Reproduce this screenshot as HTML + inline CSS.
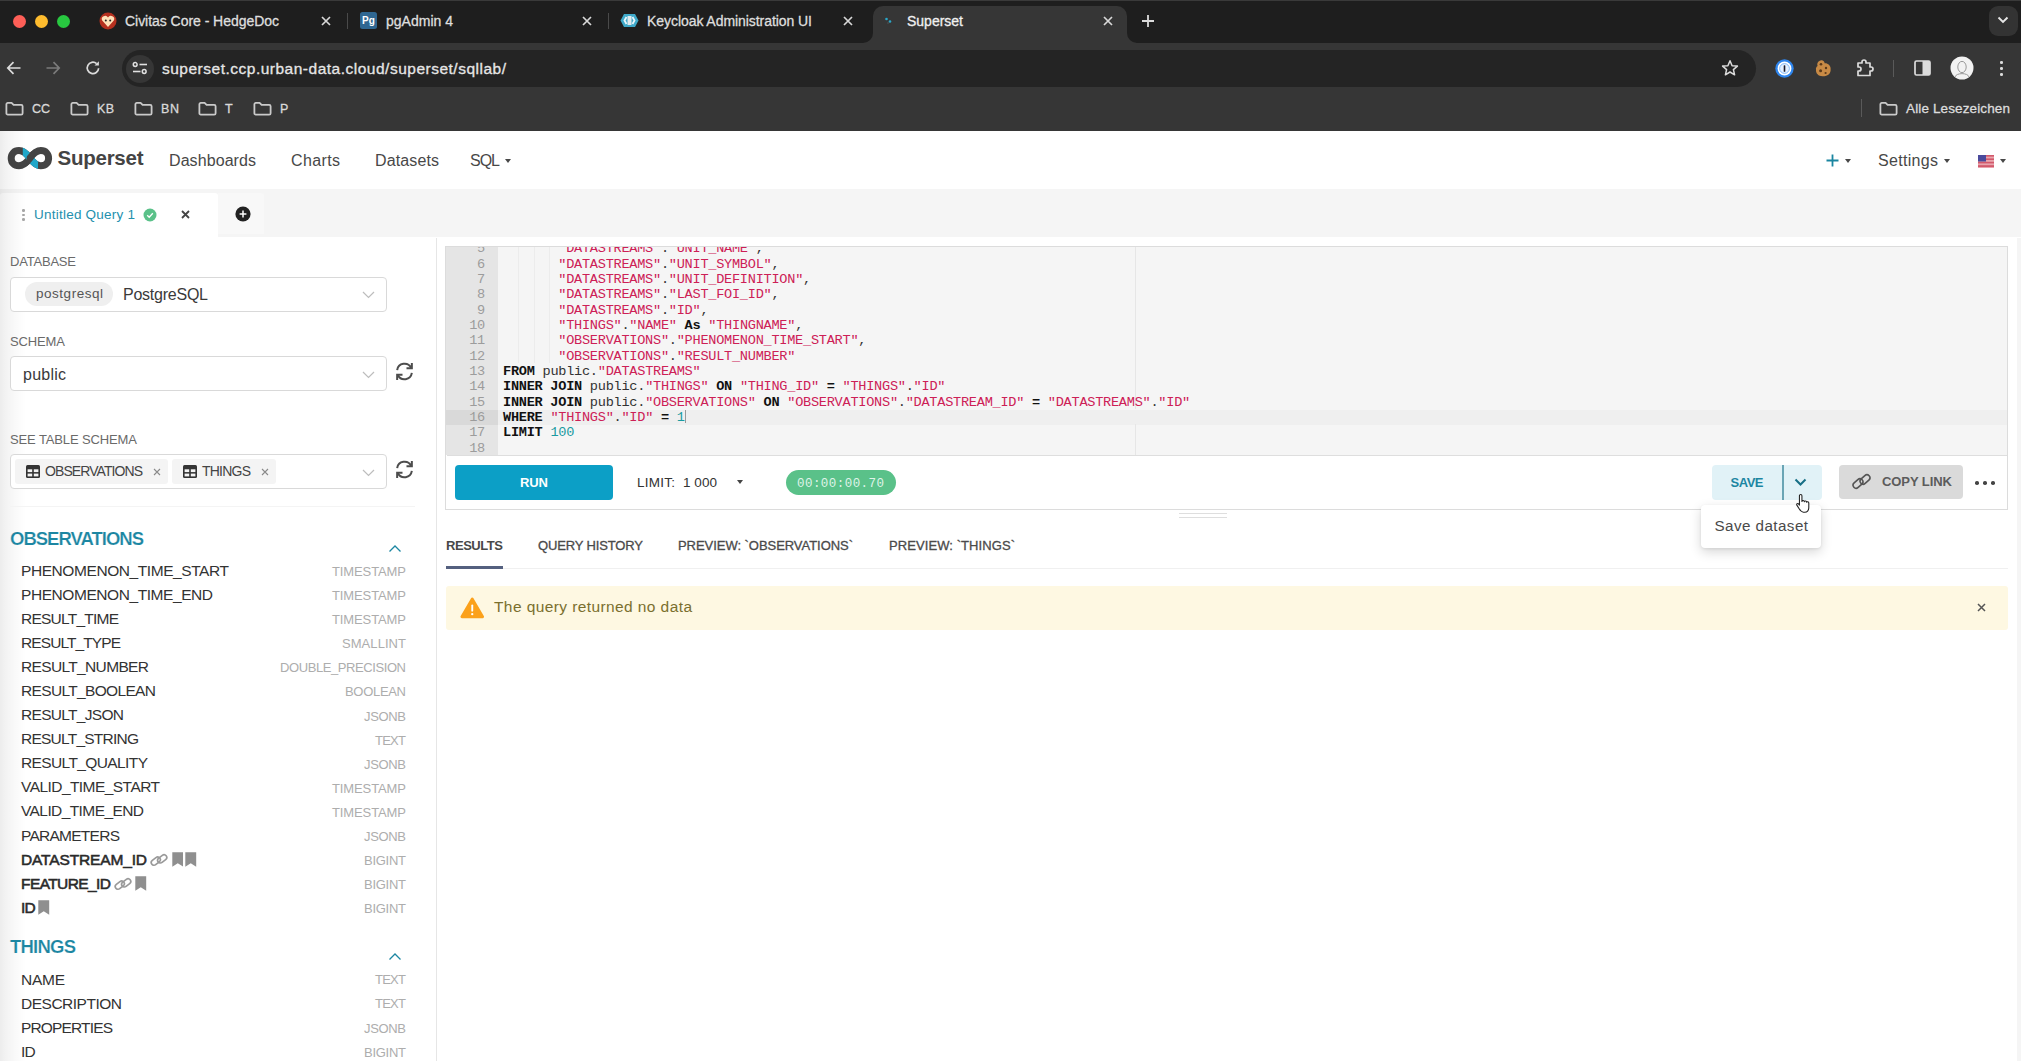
<!DOCTYPE html>
<html lang="en"><head><meta charset="utf-8"><title>Superset</title>
<style>
html,body{margin:0;padding:0;background:#fff;}
body{width:2021px;height:1061px;position:relative;overflow:hidden;font-family:"Liberation Sans",sans-serif;}
div,span,svg{position:absolute;box-sizing:border-box;}
span{white-space:pre;line-height:1;}
span span{position:static;}
</style></head><body>
<div style="left:0px;top:0px;width:2021px;height:43px;background:#1e1e1e;"></div>
<div style="left:0px;top:0px;width:2021px;height:1px;background:#3a3a3a;"></div>
<div style="left:0px;top:43px;width:2021px;height:88px;background:#363636;"></div>
<div style="left:13.0px;top:15px;width:13px;height:13px;background:#fe5f57;border-radius:50%;"></div>
<div style="left:34.8px;top:15px;width:13px;height:13px;background:#febc2e;border-radius:50%;"></div>
<div style="left:56.8px;top:15px;width:13px;height:13px;background:#28c840;border-radius:50%;"></div>
<div style="left:873px;top:6px;width:253.5px;height:37px;background:#363636;border-radius:10px 10px 0 0;"></div>
<svg style="left:863px;top:33px" width="10" height="10"><path d="M10 0 V10 H0 A10 10 0 0 0 10 0Z" fill="#363636"/></svg>
<svg style="left:1126.5px;top:33px" width="10" height="10"><path d="M0 0 V10 H10 A10 10 0 0 1 0 0Z" fill="#363636"/></svg>
<div style="left:347px;top:13px;width:1px;height:16px;background:#4a4a4a;"></div>
<div style="left:608px;top:13px;width:1px;height:16px;background:#4a4a4a;"></div>
<svg style="left:99px;top:12px" width="18" height="18" viewBox="0 0 18 18"><circle cx="9" cy="9" r="8.5" fill="#b5301f"/><path d="M9 15 L3.2 8.6 A3.2 3.2 0 0 1 9 5.6 A3.2 3.2 0 0 1 14.8 8.6Z" fill="#ffe1b8"/><circle cx="6.8" cy="8.6" r="1" fill="#222"/><circle cx="11.2" cy="8.6" r="1" fill="#222"/></svg>
<svg style="left:360px;top:12px" width="17" height="17" viewBox="0 0 17 17"><rect width="17" height="17" rx="2.5" fill="#2f6792"/><text x="8.5" y="12.3" font-family="Liberation Sans,sans-serif" font-weight="700" font-size="10" fill="#fff" text-anchor="middle">Pg</text></svg>
<svg style="left:620px;top:13px" width="19" height="15" viewBox="0 0 19 15"><path d="M4 1 H15 L18.5 7.5 L15 14 H4 L0.5 7.5Z" fill="#3fa9c9"/><path d="M6.5 4 L4.5 7.5 L6.5 11 M12.5 4 L14.5 7.5 L12.5 11" stroke="#e8f6fb" stroke-width="1.8" fill="none"/><rect x="7.5" y="3" width="4" height="9" fill="#dfe9ee"/></svg>
<svg style="left:883px;top:15px" width="12" height="12" viewBox="0 0 12 12"><circle cx="3.5" cy="4" r="1.3" fill="#2aa7c9"/><circle cx="7" cy="6.5" r="1.3" fill="#2aa7c9"/><circle cx="5" cy="8" r="0.8" fill="#555"/></svg>
<svg style="left:321px;top:16px" width="10" height="10"><path d="M1 1 L9 9 M9 1 L1 9" stroke="#d8d8d8" stroke-width="1.7" fill="none"/></svg>
<svg style="left:582px;top:16px" width="10" height="10"><path d="M1 1 L9 9 M9 1 L1 9" stroke="#d8d8d8" stroke-width="1.7" fill="none"/></svg>
<svg style="left:843px;top:16px" width="10" height="10"><path d="M1 1 L9 9 M9 1 L1 9" stroke="#d8d8d8" stroke-width="1.7" fill="none"/></svg>
<svg style="left:1103px;top:16px" width="10" height="10"><path d="M1 1 L9 9 M9 1 L1 9" stroke="#d8d8d8" stroke-width="1.7" fill="none"/></svg>
<svg style="left:1141px;top:14px" width="14" height="14"><path d="M7 1 V13 M1 7 H13" stroke="#dcdcdc" stroke-width="1.8"/></svg>
<div style="left:1989px;top:6px;width:29px;height:30px;background:#333333;border-radius:9px;"></div>
<svg style="left:1997px;top:16px" width="12" height="9"><path d="M1.5 1.5 L6 6 L10.5 1.5" stroke="#e6e6e6" stroke-width="1.9" fill="none"/></svg>
<svg style="left:6px;top:60px" width="16" height="16" viewBox="0 0 16 16"><path d="M14.5 8 H2 M7.5 2.2 L1.8 8 L7.5 13.8" stroke="#dcdcdc" stroke-width="1.7" fill="none"/></svg>
<svg style="left:45px;top:60px" width="16" height="16" viewBox="0 0 16 16"><path d="M1.5 8 H14 M8.5 2.2 L14.2 8 L8.5 13.8" stroke="#7b7b7b" stroke-width="1.7" fill="none"/></svg>
<svg style="left:85px;top:60px" width="16" height="16" viewBox="0 0 16 16"><path d="M13.6 8.2 A5.7 5.7 0 1 1 11.6 3.6" stroke="#dcdcdc" stroke-width="1.7" fill="none"/><path d="M13.9 1.2 V5.6 H9.5Z" fill="#dcdcdc"/></svg>
<div style="left:122px;top:50px;width:1634px;height:37px;background:#242424;border-radius:18.5px;"></div>
<div style="left:126px;top:54.5px;width:28px;height:28px;background:#363636;border-radius:14px;"></div>
<svg style="left:132px;top:61px" width="16" height="14" viewBox="0 0 16 14"><circle cx="3.2" cy="3.5" r="1.9" stroke="#e2e2e2" stroke-width="1.5" fill="none"/><path d="M7.5 3.5 H15" stroke="#e2e2e2" stroke-width="1.6"/><circle cx="12.2" cy="10.5" r="1.9" stroke="#e2e2e2" stroke-width="1.5" fill="none"/><path d="M1 10.5 H8.5" stroke="#e2e2e2" stroke-width="1.6"/></svg>
<svg style="left:1721px;top:59px" width="18" height="18" viewBox="0 0 18 18"><path d="M9 1.8 L11.1 6.7 L16.4 7.1 L12.4 10.6 L13.6 15.8 L9 13 L4.4 15.8 L5.6 10.6 L1.6 7.1 L6.9 6.7Z" stroke="#dcdcdc" stroke-width="1.5" fill="none" stroke-linejoin="round"/></svg>
<svg style="left:1774.5px;top:58.5px" width="19" height="19" viewBox="0 0 19 19"><circle cx="9.5" cy="9.5" r="9.2" fill="#2f86ee"/><circle cx="9.5" cy="9.5" r="6.9" fill="#ffffff"/><circle cx="9.5" cy="9.5" r="4.9" fill="#e4f0ff" stroke="#6aa9f5" stroke-width="0.8"/><rect x="8.7" y="6.2" width="1.6" height="6.6" rx="0.6" fill="#1a1a2a"/></svg>
<svg style="left:1814px;top:59px" width="19" height="19" viewBox="0 0 19 19"><path d="M6.5 1.5 C9 0.8 10.5 2.6 10.6 4.2 C13.5 3.8 17.2 6.5 16.6 10.6 C17 14.5 13.5 17.6 9.6 17.2 C5 17.8 1.6 14.8 2 10.8 C1.6 9 2.6 7.6 3.6 7 C2.6 4.6 4.2 2 6.5 1.5Z" fill="#c88a45"/><circle cx="7" cy="5.2" r="1.3" fill="#5b3a1a"/><circle cx="6.6" cy="11.8" r="1.5" fill="#5b3a1a"/><circle cx="12" cy="9" r="1.2" fill="#5b3a1a"/><circle cx="11.6" cy="14" r="1.1" fill="#5b3a1a"/></svg>
<svg style="left:1855px;top:58px" width="19" height="20" viewBox="0 0 19 20"><path d="M3 5 H7 V4 A2 2 0 0 1 11 4 V5 H15 V9 H16 A2 2 0 0 1 16 13 H15 V17.5 H3 V13 H4 A2 2 0 0 0 4 9 H3Z" stroke="#dcdcdc" stroke-width="1.7" fill="none" stroke-linejoin="round"/></svg>
<div style="left:1893px;top:60px;width:1px;height:17px;background:#5a5a5a;"></div>
<svg style="left:1914px;top:60px" width="17" height="16" viewBox="0 0 17 16"><rect x="1" y="1" width="15" height="14" rx="1.5" stroke="#dcdcdc" stroke-width="1.7" fill="none"/><rect x="8.5" y="1" width="7.5" height="14" fill="#dcdcdc"/></svg>
<svg style="left:1950px;top:56px" width="24" height="24" viewBox="0 0 24 24"><circle cx="12" cy="12" r="11.5" fill="#f2f2f2"/><ellipse cx="12" cy="11" rx="4.2" ry="5.6" fill="none" stroke="#999" stroke-width="1"/><path d="M5 21 C6 16.5 18 16.5 19 21" stroke="#999" stroke-width="1" fill="none"/></svg>
<div style="left:2000px;top:61px;width:2.6px;height:2.6px;background:#dcdcdc;border-radius:50%;"></div>
<div style="left:2000px;top:67px;width:2.6px;height:2.6px;background:#dcdcdc;border-radius:50%;"></div>
<div style="left:2000px;top:73px;width:2.6px;height:2.6px;background:#dcdcdc;border-radius:50%;"></div>
<svg style="left:5px;top:101px" width="19" height="15" viewBox="0 0 19 15"><path d="M2.8 1.9 H6.6 L8.6 3.9 H16.2 A1.4 1.4 0 0 1 17.6 5.3 V12.2 A1.4 1.4 0 0 1 16.2 13.6 H2.8 A1.4 1.4 0 0 1 1.4 12.2 V3.3 A1.4 1.4 0 0 1 2.8 1.9Z" stroke="#cacaca" stroke-width="1.8" fill="none" stroke-linejoin="round"/></svg>
<svg style="left:70px;top:101px" width="19" height="15" viewBox="0 0 19 15"><path d="M2.8 1.9 H6.6 L8.6 3.9 H16.2 A1.4 1.4 0 0 1 17.6 5.3 V12.2 A1.4 1.4 0 0 1 16.2 13.6 H2.8 A1.4 1.4 0 0 1 1.4 12.2 V3.3 A1.4 1.4 0 0 1 2.8 1.9Z" stroke="#cacaca" stroke-width="1.8" fill="none" stroke-linejoin="round"/></svg>
<svg style="left:134px;top:101px" width="19" height="15" viewBox="0 0 19 15"><path d="M2.8 1.9 H6.6 L8.6 3.9 H16.2 A1.4 1.4 0 0 1 17.6 5.3 V12.2 A1.4 1.4 0 0 1 16.2 13.6 H2.8 A1.4 1.4 0 0 1 1.4 12.2 V3.3 A1.4 1.4 0 0 1 2.8 1.9Z" stroke="#cacaca" stroke-width="1.8" fill="none" stroke-linejoin="round"/></svg>
<svg style="left:198px;top:101px" width="19" height="15" viewBox="0 0 19 15"><path d="M2.8 1.9 H6.6 L8.6 3.9 H16.2 A1.4 1.4 0 0 1 17.6 5.3 V12.2 A1.4 1.4 0 0 1 16.2 13.6 H2.8 A1.4 1.4 0 0 1 1.4 12.2 V3.3 A1.4 1.4 0 0 1 2.8 1.9Z" stroke="#cacaca" stroke-width="1.8" fill="none" stroke-linejoin="round"/></svg>
<svg style="left:253px;top:101px" width="19" height="15" viewBox="0 0 19 15"><path d="M2.8 1.9 H6.6 L8.6 3.9 H16.2 A1.4 1.4 0 0 1 17.6 5.3 V12.2 A1.4 1.4 0 0 1 16.2 13.6 H2.8 A1.4 1.4 0 0 1 1.4 12.2 V3.3 A1.4 1.4 0 0 1 2.8 1.9Z" stroke="#cacaca" stroke-width="1.8" fill="none" stroke-linejoin="round"/></svg>
<div style="left:1861px;top:99px;width:1px;height:18px;background:#5a5a5a;"></div>
<svg style="left:1879px;top:101px" width="19" height="15" viewBox="0 0 19 15"><path d="M2.8 1.9 H6.6 L8.6 3.9 H16.2 A1.4 1.4 0 0 1 17.6 5.3 V12.2 A1.4 1.4 0 0 1 16.2 13.6 H2.8 A1.4 1.4 0 0 1 1.4 12.2 V3.3 A1.4 1.4 0 0 1 2.8 1.9Z" stroke="#cacaca" stroke-width="1.8" fill="none" stroke-linejoin="round"/></svg>
<div style="left:0px;top:131px;width:2021px;height:58px;background:#ffffff;"></div>
<svg style="left:0px;top:140px" width="60" height="40" viewBox="0 140 60 40"><defs><clipPath id="lc1"><rect x="22.8" y="140" width="15.2" height="40"/></clipPath><clipPath id="lc2"><rect x="26.6" y="140" width="7.6" height="40"/></clipPath></defs><path d="M29.9 158.2 C26 153 23 150.6 19 150.6 C14 150.6 11.2 154 11.2 158.2 C11.2 162.4 14 165.8 19 165.8 C23 165.8 26 163.4 29.9 158.2 C33.8 153 36.8 150.6 40.8 150.6 C45.8 150.6 48.6 154 48.6 158.2 C48.6 162.4 45.8 165.8 40.8 165.8 C36.8 165.8 33.8 163.4 29.9 158.2Z" stroke="#444" stroke-width="7" fill="none"/><path d="M19 150.6 C23 150.6 26 153 29.9 158.2 C33.8 163.4 36.8 165.8 40.8 165.8" stroke="#20a7c9" stroke-width="7" fill="none" clip-path="url(#lc1)"/><path d="M19 165.8 C23 165.8 26 163.4 29.9 158.2 C33.8 153 36.8 150.6 40.8 150.6" stroke="#444" stroke-width="7" fill="none" clip-path="url(#lc2)"/></svg>
<svg style="left:505.0px;top:159px" width="6" height="4"><path d="M0 0 H6 L3.0 4Z" fill="#484848"/></svg>
<svg style="left:1825.5px;top:154px" width="13" height="13"><path d="M6.5 0.5 V12.5 M0.5 6.5 H12.5" stroke="#1a85a0" stroke-width="1.8"/></svg>
<svg style="left:1845.0px;top:159px" width="6" height="4"><path d="M0 0 H6 L3.0 4Z" fill="#484848"/></svg>
<svg style="left:1944.0px;top:159px" width="6" height="4"><path d="M0 0 H6 L3.0 4Z" fill="#484848"/></svg>
<svg style="left:1978px;top:155px" width="16" height="13" viewBox="0 0 16 13"><rect width="16" height="13" fill="#e9a5ad"/><rect y="0" width="16" height="1.6" fill="#d2596b"/><rect y="3.4" width="16" height="1.6" fill="#d2596b"/><rect y="6.8" width="16" height="1.6" fill="#d2596b"/><rect y="10.2" width="16" height="1.8" fill="#d2596b"/><rect width="8" height="6.5" fill="#4a4a9c"/></svg>
<svg style="left:2000.0px;top:159px" width="6" height="4"><path d="M0 0 H6 L3.0 4Z" fill="#484848"/></svg>
<div style="left:0px;top:189.4px;width:2021px;height:48px;background:#f5f5f5;"></div>
<div style="left:0px;top:193px;width:218px;height:45px;background:#ffffff;border-radius:3px 3px 0 0;"></div>
<div style="left:218px;top:193px;width:46px;height:41px;background:#f8f8f8;border-radius:0 3px 0 0;"></div>
<div style="left:0px;top:238px;width:2021px;height:9px;background:#ffffff;"></div>
<div style="left:22px;top:209.3px;width:2.6px;height:2.6px;background:#a6a6a6;border-radius:50%;"></div>
<div style="left:22px;top:213.7px;width:2.6px;height:2.6px;background:#a6a6a6;border-radius:50%;"></div>
<div style="left:22px;top:218.1px;width:2.6px;height:2.6px;background:#a6a6a6;border-radius:50%;"></div>
<svg style="left:143px;top:208px" width="14" height="14" viewBox="0 0 14 14"><circle cx="7" cy="7" r="6.5" fill="#5ac189"/><path d="M4.2 7.2 L6.2 9.2 L9.8 5.2" stroke="#fff" stroke-width="1.3" fill="none"/></svg>
<svg style="left:180.5px;top:210.0px" width="9.0" height="9.0"><path d="M1 1 L8.0 8.0 M8.0 1 L1 8.0" stroke="#444" stroke-width="1.8" fill="none"/></svg>
<svg style="left:235px;top:206px" width="16" height="16" viewBox="0 0 16 16"><circle cx="8" cy="8" r="7.6" fill="#222"/><path d="M8 4.6 V11.4 M4.6 8 H11.4" stroke="#fff" stroke-width="1.5"/></svg>
<div style="left:0px;top:238px;width:436px;height:823px;background:#ffffff;"></div>
<div style="left:0;top:131px;width:26px;height:930px;background:linear-gradient(90deg,rgba(0,0,0,0.075) 0,rgba(0,0,0,0.05) 5px,rgba(0,0,0,0.03) 12px,rgba(0,0,0,0.012) 20px,rgba(0,0,0,0) 26px);"></div>
<div style="left:436px;top:238px;width:1px;height:823px;background:#e6e6e6;"></div>
<div style="left:10px;top:276.5px;width:377px;height:35px;background:#fff;border:1px solid #d9d9d9;border-radius:4px;"></div>
<svg style="left:362px;top:291.0px" width="13" height="8"><path d="M1 1 L6.5 6.5 L12 1" stroke="#bdbdbd" stroke-width="1.2" fill="none"/></svg>
<div style="left:10px;top:356px;width:377px;height:35px;background:#fff;border:1px solid #d9d9d9;border-radius:4px;"></div>
<svg style="left:362px;top:370.5px" width="13" height="8"><path d="M1 1 L6.5 6.5 L12 1" stroke="#bdbdbd" stroke-width="1.2" fill="none"/></svg>
<div style="left:10px;top:454px;width:377px;height:35px;background:#fff;border:1px solid #d9d9d9;border-radius:4px;"></div>
<svg style="left:362px;top:468.5px" width="13" height="8"><path d="M1 1 L6.5 6.5 L12 1" stroke="#bdbdbd" stroke-width="1.2" fill="none"/></svg>
<div style="left:25px;top:282px;width:88px;height:24px;background:#efefef;border-radius:12px;"></div>
<svg style="left:394.0px;top:361.0px" width="21" height="21" viewBox="0 0 20 20"><g stroke="#4d4d4d" stroke-width="1.9" fill="none"><path d="M3 8.6 A7.1 7.1 0 0 1 16.3 6.4"/><path d="M17 11.4 A7.1 7.1 0 0 1 3.7 13.6"/><path d="M17 1.8 V6.9 H11.9"/><path d="M3 18.2 V13.1 H8.1"/></g></svg>
<svg style="left:394.0px;top:459.0px" width="21" height="21" viewBox="0 0 20 20"><g stroke="#4d4d4d" stroke-width="1.9" fill="none"><path d="M3 8.6 A7.1 7.1 0 0 1 16.3 6.4"/><path d="M17 11.4 A7.1 7.1 0 0 1 3.7 13.6"/><path d="M17 1.8 V6.9 H11.9"/><path d="M3 18.2 V13.1 H8.1"/></g></svg>
<div style="left:15px;top:459px;width:153px;height:25px;background:#f4f4f4;border-radius:3px;"></div>
<div style="left:172px;top:459px;width:104px;height:25px;background:#f4f4f4;border-radius:3px;"></div>
<svg style="left:26px;top:465px" width="14" height="13" viewBox="0 0 14 13"><rect width="14" height="13" rx="1.5" fill="#333"/><rect x="1.6" y="4.3" width="4.6" height="2.8" fill="#f4f4f4"/><rect x="7.8" y="4.3" width="4.6" height="2.8" fill="#f4f4f4"/><rect x="1.6" y="8.6" width="4.6" height="2.8" fill="#f4f4f4"/><rect x="7.8" y="8.6" width="4.6" height="2.8" fill="#f4f4f4"/></svg>
<svg style="left:183px;top:465px" width="14" height="13" viewBox="0 0 14 13"><rect width="14" height="13" rx="1.5" fill="#333"/><rect x="1.6" y="4.3" width="4.6" height="2.8" fill="#f4f4f4"/><rect x="7.8" y="4.3" width="4.6" height="2.8" fill="#f4f4f4"/><rect x="1.6" y="8.6" width="4.6" height="2.8" fill="#f4f4f4"/><rect x="7.8" y="8.6" width="4.6" height="2.8" fill="#f4f4f4"/></svg>
<svg style="left:153px;top:467.5px" width="8" height="8"><path d="M1 1 L7 7 M7 1 L1 7" stroke="#8a8a8a" stroke-width="1.1" fill="none"/></svg>
<svg style="left:260.5px;top:467.5px" width="8" height="8"><path d="M1 1 L7 7 M7 1 L1 7" stroke="#8a8a8a" stroke-width="1.1" fill="none"/></svg>
<div style="left:10px;top:506px;width:405px;height:1px;background:#f4f4f4;"></div>
<svg style="left:388px;top:544px" width="14" height="9"><path d="M1.5 7.5 L7 2 L12.5 7.5" stroke="#1c86a2" stroke-width="1.3" fill="none"/></svg>
<svg style="left:150.3px;top:851.7px" width="18" height="16" viewBox="0 0 18 16"><g fill="none" stroke="#9a9a9a" stroke-width="1.7"><rect x="0.8" y="6.4" width="10" height="5.4" rx="2.7" transform="rotate(-38 5.8 9.1)"/><rect x="7.2" y="4.2" width="10" height="5.4" rx="2.7" transform="rotate(-38 12.2 6.9)"/></g></svg>
<svg style="left:171.5px;top:852.0000000000001px" width="11.5" height="15" viewBox="0 0 11.5 15"><path d="M0.3 0.3 H11.2 V14.7 L5.75 11.2 L0.3 14.7Z" fill="#8f8f8f"/></svg>
<svg style="left:185.3px;top:852.0000000000001px" width="11.5" height="15" viewBox="0 0 11.5 15"><path d="M0.3 0.3 H11.2 V14.7 L5.75 11.2 L0.3 14.7Z" fill="#8f8f8f"/></svg>
<svg style="left:114.3px;top:875.7500000000001px" width="18" height="16" viewBox="0 0 18 16"><g fill="none" stroke="#9a9a9a" stroke-width="1.7"><rect x="0.8" y="6.4" width="10" height="5.4" rx="2.7" transform="rotate(-38 5.8 9.1)"/><rect x="7.2" y="4.2" width="10" height="5.4" rx="2.7" transform="rotate(-38 12.2 6.9)"/></g></svg>
<svg style="left:135.3px;top:876.0500000000002px" width="11.5" height="15" viewBox="0 0 11.5 15"><path d="M0.3 0.3 H11.2 V14.7 L5.75 11.2 L0.3 14.7Z" fill="#8f8f8f"/></svg>
<svg style="left:38.3px;top:900.1000000000001px" width="11.5" height="15" viewBox="0 0 11.5 15"><path d="M0.3 0.3 H11.2 V14.7 L5.75 11.2 L0.3 14.7Z" fill="#8f8f8f"/></svg>
<svg style="left:388px;top:952px" width="14" height="9"><path d="M1.5 7.5 L7 2 L12.5 7.5" stroke="#1c86a2" stroke-width="1.3" fill="none"/></svg>
<div style="left:2017px;top:238px;width:4px;height:823px;background:#f5f5f5;"></div>
<div style="left:445px;top:246px;width:1563px;height:264px;background:#ffffff;border:1px solid #dcdcdc;"></div>
<div style="left:447px;top:247px;width:1560px;height:208px;background:#f5f5f5;"></div>
<div style="left:446px;top:247px;width:52px;height:208px;background:#e5e5e5;"></div>
<div style="left:447px;top:455px;width:1560px;height:1px;background:#dedede;"></div>
<div style="left:498px;top:409.5px;width:1509px;height:15.3px;background:#efefef;"></div>
<div style="left:446px;top:409.5px;width:52px;height:15.3px;background:#d9d9d9;"></div>
<div style="left:1135px;top:247px;width:1px;height:162px;background:#e6e6e6;"></div>
<div style="left:1135px;top:424px;width:1px;height:31px;background:#e6e6e6;"></div>
<div style="left:518px;top:247px;width:1px;height:116px;background:#ececec;"></div>
<div style="left:533.5px;top:247px;width:1px;height:116px;background:#ececec;"></div>
<div style="left:549px;top:247px;width:1px;height:116px;background:#ececec;"></div>
<div style="left:447px;top:247px;width:1560px;height:208px;overflow:hidden;">
<span style="left:30.10px;top:-4.77px;font-family:'Liberation Mono', monospace;font-size:13.6px;letter-spacing:-0.263px;color:#9c9c9c;">5</span>
<span style="left:56px;top:-4.77px;font-family:'Liberation Mono', monospace;font-size:13.6px;letter-spacing:-0.263px;color:#333;"><span style="color:#333;">       </span><span style="color:#cd2056;">&quot;DATASTREAMS&quot;</span><span style="color:#333;">.</span><span style="color:#cd2056;">&quot;UNIT_NAME&quot;</span><span style="color:#333;">,</span></span>
<span style="left:30.10px;top:10.56px;font-family:'Liberation Mono', monospace;font-size:13.6px;letter-spacing:-0.263px;color:#9c9c9c;">6</span>
<span style="left:56px;top:10.56px;font-family:'Liberation Mono', monospace;font-size:13.6px;letter-spacing:-0.263px;color:#333;"><span style="color:#333;">       </span><span style="color:#cd2056;">&quot;DATASTREAMS&quot;</span><span style="color:#333;">.</span><span style="color:#cd2056;">&quot;UNIT_SYMBOL&quot;</span><span style="color:#333;">,</span></span>
<span style="left:30.10px;top:25.89px;font-family:'Liberation Mono', monospace;font-size:13.6px;letter-spacing:-0.263px;color:#9c9c9c;">7</span>
<span style="left:56px;top:25.89px;font-family:'Liberation Mono', monospace;font-size:13.6px;letter-spacing:-0.263px;color:#333;"><span style="color:#333;">       </span><span style="color:#cd2056;">&quot;DATASTREAMS&quot;</span><span style="color:#333;">.</span><span style="color:#cd2056;">&quot;UNIT_DEFINITION&quot;</span><span style="color:#333;">,</span></span>
<span style="left:30.10px;top:41.22px;font-family:'Liberation Mono', monospace;font-size:13.6px;letter-spacing:-0.263px;color:#9c9c9c;">8</span>
<span style="left:56px;top:41.22px;font-family:'Liberation Mono', monospace;font-size:13.6px;letter-spacing:-0.263px;color:#333;"><span style="color:#333;">       </span><span style="color:#cd2056;">&quot;DATASTREAMS&quot;</span><span style="color:#333;">.</span><span style="color:#cd2056;">&quot;LAST_FOI_ID&quot;</span><span style="color:#333;">,</span></span>
<span style="left:30.10px;top:56.55px;font-family:'Liberation Mono', monospace;font-size:13.6px;letter-spacing:-0.263px;color:#9c9c9c;">9</span>
<span style="left:56px;top:56.55px;font-family:'Liberation Mono', monospace;font-size:13.6px;letter-spacing:-0.263px;color:#333;"><span style="color:#333;">       </span><span style="color:#cd2056;">&quot;DATASTREAMS&quot;</span><span style="color:#333;">.</span><span style="color:#cd2056;">&quot;ID&quot;</span><span style="color:#333;">,</span></span>
<span style="left:22.21px;top:71.88px;font-family:'Liberation Mono', monospace;font-size:13.6px;letter-spacing:-0.263px;color:#9c9c9c;">10</span>
<span style="left:56px;top:71.88px;font-family:'Liberation Mono', monospace;font-size:13.6px;letter-spacing:-0.263px;color:#333;"><span style="color:#333;">       </span><span style="color:#cd2056;">&quot;THINGS&quot;</span><span style="color:#333;">.</span><span style="color:#cd2056;">&quot;NAME&quot;</span><span style="color:#111;font-weight:700;"> As </span><span style="color:#cd2056;">&quot;THINGNAME&quot;</span><span style="color:#333;">,</span></span>
<span style="left:22.21px;top:87.21px;font-family:'Liberation Mono', monospace;font-size:13.6px;letter-spacing:-0.263px;color:#9c9c9c;">11</span>
<span style="left:56px;top:87.21px;font-family:'Liberation Mono', monospace;font-size:13.6px;letter-spacing:-0.263px;color:#333;"><span style="color:#333;">       </span><span style="color:#cd2056;">&quot;OBSERVATIONS&quot;</span><span style="color:#333;">.</span><span style="color:#cd2056;">&quot;PHENOMENON_TIME_START&quot;</span><span style="color:#333;">,</span></span>
<span style="left:22.21px;top:102.54px;font-family:'Liberation Mono', monospace;font-size:13.6px;letter-spacing:-0.263px;color:#9c9c9c;">12</span>
<span style="left:56px;top:102.54px;font-family:'Liberation Mono', monospace;font-size:13.6px;letter-spacing:-0.263px;color:#333;"><span style="color:#333;">       </span><span style="color:#cd2056;">&quot;OBSERVATIONS&quot;</span><span style="color:#333;">.</span><span style="color:#cd2056;">&quot;RESULT_NUMBER&quot;</span></span>
<span style="left:22.21px;top:117.87px;font-family:'Liberation Mono', monospace;font-size:13.6px;letter-spacing:-0.263px;color:#9c9c9c;">13</span>
<span style="left:56px;top:117.87px;font-family:'Liberation Mono', monospace;font-size:13.6px;letter-spacing:-0.263px;color:#333;"><span style="color:#111;font-weight:700;">FROM</span><span style="color:#333;"> public.</span><span style="color:#cd2056;">&quot;DATASTREAMS&quot;</span></span>
<span style="left:22.21px;top:133.20px;font-family:'Liberation Mono', monospace;font-size:13.6px;letter-spacing:-0.263px;color:#9c9c9c;">14</span>
<span style="left:56px;top:133.20px;font-family:'Liberation Mono', monospace;font-size:13.6px;letter-spacing:-0.263px;color:#333;"><span style="color:#111;font-weight:700;">INNER JOIN</span><span style="color:#333;"> public.</span><span style="color:#cd2056;">&quot;THINGS&quot;</span><span style="color:#111;font-weight:700;"> ON </span><span style="color:#cd2056;">&quot;THING_ID&quot;</span><span style="color:#111;font-weight:700;"> = </span><span style="color:#cd2056;">&quot;THINGS&quot;</span><span style="color:#333;">.</span><span style="color:#cd2056;">&quot;ID&quot;</span></span>
<span style="left:22.21px;top:148.53px;font-family:'Liberation Mono', monospace;font-size:13.6px;letter-spacing:-0.263px;color:#9c9c9c;">15</span>
<span style="left:56px;top:148.53px;font-family:'Liberation Mono', monospace;font-size:13.6px;letter-spacing:-0.263px;color:#333;"><span style="color:#111;font-weight:700;">INNER JOIN</span><span style="color:#333;"> public.</span><span style="color:#cd2056;">&quot;OBSERVATIONS&quot;</span><span style="color:#111;font-weight:700;"> ON </span><span style="color:#cd2056;">&quot;OBSERVATIONS&quot;</span><span style="color:#333;">.</span><span style="color:#cd2056;">&quot;DATASTREAM_ID&quot;</span><span style="color:#111;font-weight:700;"> = </span><span style="color:#cd2056;">&quot;DATASTREAMS&quot;</span><span style="color:#333;">.</span><span style="color:#cd2056;">&quot;ID&quot;</span></span>
<span style="left:22.21px;top:163.86px;font-family:'Liberation Mono', monospace;font-size:13.6px;letter-spacing:-0.263px;color:#9c9c9c;">16</span>
<span style="left:56px;top:163.86px;font-family:'Liberation Mono', monospace;font-size:13.6px;letter-spacing:-0.263px;color:#333;"><span style="color:#111;font-weight:700;">WHERE</span><span style="color:#333;"> </span><span style="color:#cd2056;">&quot;THINGS&quot;</span><span style="color:#333;">.</span><span style="color:#cd2056;">&quot;ID&quot;</span><span style="color:#111;font-weight:700;"> = </span><span style="color:#1a9ba1;">1</span></span>
<span style="left:22.21px;top:179.19px;font-family:'Liberation Mono', monospace;font-size:13.6px;letter-spacing:-0.263px;color:#9c9c9c;">17</span>
<span style="left:56px;top:179.19px;font-family:'Liberation Mono', monospace;font-size:13.6px;letter-spacing:-0.263px;color:#333;"><span style="color:#111;font-weight:700;">LIMIT</span><span style="color:#333;"> </span><span style="color:#1a9ba1;">100</span></span>
<span style="left:22.21px;top:194.52px;font-family:'Liberation Mono', monospace;font-size:13.6px;letter-spacing:-0.263px;color:#9c9c9c;">18</span>
</div>
<div style="left:685px;top:410px;width:1px;height:13px;background:#9a9a9a;"></div>
<div style="left:455px;top:465px;width:158px;height:35px;background:#0c9fc6;border-radius:4px;"></div>
<svg style="left:737.0px;top:480px" width="6" height="4"><path d="M0 0 H6 L3.0 4Z" fill="#444"/></svg>
<div style="left:786px;top:470px;width:110px;height:25px;background:#5ac189;border-radius:12.5px;"></div>
<div style="left:1712px;top:465px;width:109.5px;height:35px;background:#e1f2f7;border-radius:4px;"></div>
<div style="left:1782px;top:465px;width:2px;height:35px;background:#6aa5b5;"></div>
<svg style="left:1794px;top:478px" width="13" height="9"><path d="M1.5 1.5 L6.5 6.5 L11.5 1.5" stroke="#176f86" stroke-width="2" fill="none"/></svg>
<div style="left:1839px;top:465px;width:124px;height:34px;background:#dadada;border-radius:4px;"></div>
<svg style="left:1852px;top:473px" width="19" height="18" viewBox="0 0 19 18"><g fill="none" stroke="#555" stroke-width="1.6"><rect x="0.5" y="7.5" width="11" height="6" rx="3" transform="rotate(-42 6 10.5)"/><rect x="7.5" y="3.5" width="11" height="6" rx="3" transform="rotate(-42 13 6.5)"/></g></svg>
<div style="left:1975.2px;top:481px;width:3.6px;height:3.6px;background:#444;border-radius:50%;"></div>
<div style="left:1983.2px;top:481px;width:3.6px;height:3.6px;background:#444;border-radius:50%;"></div>
<div style="left:1991.2px;top:481px;width:3.6px;height:3.6px;background:#444;border-radius:50%;"></div>
<div style="left:1179px;top:513px;width:48px;height:1px;background:#dedede;"></div>
<div style="left:1179px;top:517px;width:48px;height:1px;background:#dedede;"></div>
<div style="left:446px;top:568px;width:1562px;height:1px;background:#f0f0f0;"></div>
<div style="left:446px;top:566px;width:57px;height:3px;background:#54607f;"></div>
<div style="left:446px;top:585.5px;width:1562px;height:44.5px;background:#fef8e2;border-radius:3px;"></div>
<svg style="left:459.5px;top:596.5px" width="24.5" height="22.6" viewBox="0 0 26 24"><path d="M13 2 L24 21 H2Z" fill="#fba11b" stroke="#fba11b" stroke-width="3" stroke-linejoin="round"/><rect x="12" y="8" width="2" height="7.5" rx="1" fill="#fff"/><circle cx="13" cy="18.2" r="1.2" fill="#fff"/></svg>
<svg style="left:1977.0px;top:603.0px" width="9.0" height="9.0"><path d="M1 1 L8.0 8.0 M8.0 1 L1 8.0" stroke="#555" stroke-width="1.5" fill="none"/></svg>
<div style="left:1701px;top:505px;width:120px;height:43px;background:#ffffff;border-radius:4px;box-shadow:0 4px 12px rgba(0,0,0,0.16),0 1px 3px rgba(0,0,0,0.08);"></div>
<svg style="left:1794px;top:493px" width="18" height="20.5" viewBox="1 0 17 23"><path d="M5.5 3 C5.5 1.3 8.3 1.3 8.3 3 V9.5 C8.3 8 11 8 11 9.8 C11 8.5 13.6 8.6 13.6 10.4 C13.6 9.4 16 9.5 16 11.2 V16 C16 19 14.5 21.5 11.5 21.5 H10 C7.5 21.5 6.5 20 5 17.5 L2.6 13.6 C1.8 12.2 3.8 11.2 4.7 12.5 L5.5 13.6Z" fill="#fff" stroke="#222" stroke-width="1.2" stroke-linejoin="round"/></svg>
<span style="left:125px;top:14.00px;font-size:14px;color:#dedede;font-weight:400;font-family:'Liberation Sans', sans-serif;letter-spacing:-0.038px;-webkit-text-stroke:0.3px;">Civitas Core - HedgeDoc</span>
<span style="left:386px;top:14.00px;font-size:14px;color:#dedede;font-weight:400;font-family:'Liberation Sans', sans-serif;letter-spacing:0.008px;-webkit-text-stroke:0.3px;">pgAdmin 4</span>
<span style="left:647px;top:14.00px;font-size:14px;color:#dedede;font-weight:400;font-family:'Liberation Sans', sans-serif;letter-spacing:-0.061px;-webkit-text-stroke:0.3px;">Keycloak Administration UI</span>
<span style="left:907px;top:14.00px;font-size:14px;color:#f0f0f0;font-weight:400;font-family:'Liberation Sans', sans-serif;letter-spacing:-0.007px;-webkit-text-stroke:0.3px;">Superset</span>
<span style="left:162px;top:60.65px;font-size:15.5px;color:#e6e6e6;font-weight:400;font-family:'Liberation Sans', sans-serif;letter-spacing:0.502px;-webkit-text-stroke:0.3px;">superset.ccp.urban-data.cloud/superset/sqllab/</span>
<span style="left:32px;top:102.95px;font-size:12.5px;color:#d9d9d9;font-weight:400;font-family:'Liberation Sans', sans-serif;letter-spacing:-0.062px;-webkit-text-stroke:0.3px;">CC</span>
<span style="left:97px;top:102.95px;font-size:12.5px;color:#d9d9d9;font-weight:400;font-family:'Liberation Sans', sans-serif;letter-spacing:0.312px;-webkit-text-stroke:0.3px;">KB</span>
<span style="left:161px;top:102.95px;font-size:12.5px;color:#d9d9d9;font-weight:400;font-family:'Liberation Sans', sans-serif;letter-spacing:0.625px;-webkit-text-stroke:0.3px;">BN</span>
<span style="left:225px;top:102.95px;font-size:12.5px;color:#d9d9d9;font-weight:400;font-family:'Liberation Sans', sans-serif;letter-spacing:0.359px;-webkit-text-stroke:0.3px;">T</span>
<span style="left:280px;top:102.95px;font-size:12.5px;color:#d9d9d9;font-weight:400;font-family:'Liberation Sans', sans-serif;letter-spacing:-0.344px;-webkit-text-stroke:0.3px;">P</span>
<span style="left:1906px;top:102.25px;font-size:13.5px;color:#dcdcdc;font-weight:400;font-family:'Liberation Sans', sans-serif;letter-spacing:0.128px;-webkit-text-stroke:0.3px;">Alle Lesezeichen</span>
<span style="left:57.5px;top:148.15px;font-size:20.5px;color:#444;font-weight:700;font-family:'Liberation Sans', sans-serif;letter-spacing:-0.248px;">Superset</span>
<span style="left:169px;top:153.00px;font-size:16px;color:#484848;font-weight:400;font-family:'Liberation Sans', sans-serif;letter-spacing:0.080px;">Dashboards</span>
<span style="left:291px;top:153.00px;font-size:16px;color:#484848;font-weight:400;font-family:'Liberation Sans', sans-serif;letter-spacing:0.375px;">Charts</span>
<span style="left:375px;top:153.00px;font-size:16px;color:#484848;font-weight:400;font-family:'Liberation Sans', sans-serif;letter-spacing:0.123px;">Datasets</span>
<span style="left:470px;top:153.00px;font-size:16px;color:#484848;font-weight:400;font-family:'Liberation Sans', sans-serif;letter-spacing:-1.008px;">SQL</span>
<span style="left:1878px;top:153.00px;font-size:16px;color:#484848;font-weight:400;font-family:'Liberation Sans', sans-serif;letter-spacing:0.312px;">Settings</span>
<span style="left:34px;top:207.75px;font-size:13.5px;color:#2490ae;font-weight:400;font-family:'Liberation Sans', sans-serif;letter-spacing:0.230px;">Untitled Query 1</span>
<span style="left:10px;top:255.00px;font-size:13px;color:#6a6a6a;font-weight:400;font-family:'Liberation Sans', sans-serif;letter-spacing:-0.205px;">DATABASE</span>
<span style="left:10px;top:334.80px;font-size:13px;color:#6a6a6a;font-weight:400;font-family:'Liberation Sans', sans-serif;letter-spacing:-0.125px;">SCHEMA</span>
<span style="left:10px;top:432.50px;font-size:13px;color:#6a6a6a;font-weight:400;font-family:'Liberation Sans', sans-serif;letter-spacing:-0.123px;">SEE TABLE SCHEMA</span>
<span style="left:36px;top:287.25px;font-size:13.5px;color:#555;font-weight:400;font-family:'Liberation Sans', sans-serif;letter-spacing:0.523px;">postgresql</span>
<span style="left:123px;top:286.50px;font-size:16px;color:#3a3a3a;font-weight:400;font-family:'Liberation Sans', sans-serif;letter-spacing:-0.240px;">PostgreSQL</span>
<span style="left:23px;top:366.50px;font-size:16px;color:#3a3a3a;font-weight:400;font-family:'Liberation Sans', sans-serif;letter-spacing:0.237px;">public</span>
<span style="left:45px;top:463.80px;font-size:14px;color:#444;font-weight:400;font-family:'Liberation Sans', sans-serif;letter-spacing:-0.922px;">OBSERVATIONS</span>
<span style="left:202px;top:463.80px;font-size:14px;color:#444;font-weight:400;font-family:'Liberation Sans', sans-serif;letter-spacing:-0.778px;">THINGS</span>
<span style="left:10px;top:529.75px;font-size:18.5px;color:#1c86a2;font-weight:700;font-family:'Liberation Sans', sans-serif;letter-spacing:-0.996px;-webkit-text-stroke:0.2px #fff;">OBSERVATIONS</span>
<span style="left:21px;top:562.95px;font-size:15.5px;color:#333;font-weight:400;font-family:'Liberation Sans', sans-serif;letter-spacing:-0.423px;">PHENOMENON_TIME_START</span>
<span style="left:332px;top:565.20px;font-size:13px;color:#adadad;font-weight:400;font-family:'Liberation Sans', sans-serif;letter-spacing:-0.109px;">TIMESTAMP</span>
<span style="left:21px;top:587.00px;font-size:15.5px;color:#333;font-weight:400;font-family:'Liberation Sans', sans-serif;letter-spacing:-0.434px;">PHENOMENON_TIME_END</span>
<span style="left:332px;top:589.25px;font-size:13px;color:#adadad;font-weight:400;font-family:'Liberation Sans', sans-serif;letter-spacing:-0.109px;">TIMESTAMP</span>
<span style="left:21px;top:611.05px;font-size:15.5px;color:#333;font-weight:400;font-family:'Liberation Sans', sans-serif;letter-spacing:-0.766px;">RESULT_TIME</span>
<span style="left:332px;top:613.30px;font-size:13px;color:#adadad;font-weight:400;font-family:'Liberation Sans', sans-serif;letter-spacing:-0.109px;">TIMESTAMP</span>
<span style="left:21px;top:635.10px;font-size:15.5px;color:#333;font-weight:400;font-family:'Liberation Sans', sans-serif;letter-spacing:-0.911px;">RESULT_TYPE</span>
<span style="left:342px;top:637.35px;font-size:13px;color:#adadad;font-weight:400;font-family:'Liberation Sans', sans-serif;letter-spacing:0.060px;">SMALLINT</span>
<span style="left:21px;top:659.15px;font-size:15.5px;color:#333;font-weight:400;font-family:'Liberation Sans', sans-serif;letter-spacing:-0.650px;">RESULT_NUMBER</span>
<span style="left:280px;top:661.40px;font-size:13px;color:#adadad;font-weight:400;font-family:'Liberation Sans', sans-serif;letter-spacing:-0.414px;">DOUBLE_PRECISION</span>
<span style="left:21px;top:683.20px;font-size:15.5px;color:#333;font-weight:400;font-family:'Liberation Sans', sans-serif;letter-spacing:-0.660px;">RESULT_BOOLEAN</span>
<span style="left:345px;top:685.45px;font-size:13px;color:#adadad;font-weight:400;font-family:'Liberation Sans', sans-serif;letter-spacing:-0.310px;">BOOLEAN</span>
<span style="left:21px;top:707.25px;font-size:15.5px;color:#333;font-weight:400;font-family:'Liberation Sans', sans-serif;letter-spacing:-0.697px;">RESULT_JSON</span>
<span style="left:364px;top:709.50px;font-size:13px;color:#adadad;font-weight:400;font-family:'Liberation Sans', sans-serif;letter-spacing:-0.336px;">JSONB</span>
<span style="left:21px;top:731.30px;font-size:15.5px;color:#333;font-weight:400;font-family:'Liberation Sans', sans-serif;letter-spacing:-0.766px;">RESULT_STRING</span>
<span style="left:375px;top:733.55px;font-size:13px;color:#adadad;font-weight:400;font-family:'Liberation Sans', sans-serif;letter-spacing:-0.745px;">TEXT</span>
<span style="left:21px;top:755.35px;font-size:15.5px;color:#333;font-weight:400;font-family:'Liberation Sans', sans-serif;letter-spacing:-0.612px;">RESULT_QUALITY</span>
<span style="left:364px;top:757.60px;font-size:13px;color:#adadad;font-weight:400;font-family:'Liberation Sans', sans-serif;letter-spacing:-0.336px;">JSONB</span>
<span style="left:21px;top:779.40px;font-size:15.5px;color:#333;font-weight:400;font-family:'Liberation Sans', sans-serif;letter-spacing:-0.553px;">VALID_TIME_START</span>
<span style="left:332px;top:781.65px;font-size:13px;color:#adadad;font-weight:400;font-family:'Liberation Sans', sans-serif;letter-spacing:-0.109px;">TIMESTAMP</span>
<span style="left:21px;top:803.45px;font-size:15.5px;color:#333;font-weight:400;font-family:'Liberation Sans', sans-serif;letter-spacing:-0.588px;">VALID_TIME_END</span>
<span style="left:332px;top:805.70px;font-size:13px;color:#adadad;font-weight:400;font-family:'Liberation Sans', sans-serif;letter-spacing:-0.109px;">TIMESTAMP</span>
<span style="left:21px;top:827.50px;font-size:15.5px;color:#333;font-weight:400;font-family:'Liberation Sans', sans-serif;letter-spacing:-0.740px;">PARAMETERS</span>
<span style="left:364px;top:829.75px;font-size:13px;color:#adadad;font-weight:400;font-family:'Liberation Sans', sans-serif;letter-spacing:-0.336px;">JSONB</span>
<span style="left:21px;top:851.55px;font-size:15.5px;color:#2a2a2a;font-weight:400;font-family:'Liberation Sans', sans-serif;letter-spacing:-0.146px;-webkit-text-stroke:0.55px;">DATASTREAM_ID</span>
<span style="left:364px;top:853.80px;font-size:13px;color:#adadad;font-weight:400;font-family:'Liberation Sans', sans-serif;letter-spacing:-0.269px;">BIGINT</span>
<span style="left:21px;top:875.60px;font-size:15.5px;color:#2a2a2a;font-weight:400;font-family:'Liberation Sans', sans-serif;letter-spacing:-0.590px;-webkit-text-stroke:0.55px;">FEATURE_ID</span>
<span style="left:364px;top:877.85px;font-size:13px;color:#adadad;font-weight:400;font-family:'Liberation Sans', sans-serif;letter-spacing:-0.269px;">BIGINT</span>
<span style="left:21px;top:899.65px;font-size:15.5px;color:#2a2a2a;font-weight:400;font-family:'Liberation Sans', sans-serif;letter-spacing:-0.900px;-webkit-text-stroke:0.55px;">ID</span>
<span style="left:364px;top:901.90px;font-size:13px;color:#adadad;font-weight:400;font-family:'Liberation Sans', sans-serif;letter-spacing:-0.269px;">BIGINT</span>
<span style="left:10px;top:937.75px;font-size:18.5px;color:#1c86a2;font-weight:700;font-family:'Liberation Sans', sans-serif;letter-spacing:-0.778px;-webkit-text-stroke:0.2px #fff;">THINGS</span>
<span style="left:21px;top:971.55px;font-size:15.5px;color:#333;font-weight:400;font-family:'Liberation Sans', sans-serif;letter-spacing:-0.266px;">NAME</span>
<span style="left:375px;top:973.30px;font-size:13px;color:#adadad;font-weight:400;font-family:'Liberation Sans', sans-serif;letter-spacing:-0.745px;">TEXT</span>
<span style="left:21px;top:995.65px;font-size:15.5px;color:#333;font-weight:400;font-family:'Liberation Sans', sans-serif;letter-spacing:-0.494px;">DESCRIPTION</span>
<span style="left:375px;top:997.40px;font-size:13px;color:#adadad;font-weight:400;font-family:'Liberation Sans', sans-serif;letter-spacing:-0.745px;">TEXT</span>
<span style="left:21px;top:1019.75px;font-size:15.5px;color:#333;font-weight:400;font-family:'Liberation Sans', sans-serif;letter-spacing:-0.849px;">PROPERTIES</span>
<span style="left:364px;top:1021.50px;font-size:13px;color:#adadad;font-weight:400;font-family:'Liberation Sans', sans-serif;letter-spacing:-0.336px;">JSONB</span>
<span style="left:21px;top:1043.85px;font-size:15.5px;color:#333;font-weight:400;font-family:'Liberation Sans', sans-serif;letter-spacing:-0.900px;">ID</span>
<span style="left:364px;top:1045.60px;font-size:13px;color:#adadad;font-weight:400;font-family:'Liberation Sans', sans-serif;letter-spacing:-0.269px;">BIGINT</span>
<span style="left:520px;top:476.00px;font-size:13px;color:#ffffff;font-weight:700;font-family:'Liberation Sans', sans-serif;letter-spacing:-0.086px;">RUN</span>
<span style="left:637px;top:475.75px;font-size:13.5px;color:#333;font-weight:400;font-family:'Liberation Sans', sans-serif;letter-spacing:0.247px;">LIMIT:</span>
<span style="left:683px;top:475.75px;font-size:13.5px;color:#333;font-weight:400;font-family:'Liberation Sans', sans-serif;letter-spacing:0.051px;">1 000</span>
<span style="left:797px;top:477.75px;font-size:12.5px;color:#def3e8;font-weight:400;font-family:'Liberation Mono', monospace;letter-spacing:0.448px;">00:00:00.70</span>
<span style="left:1730.5px;top:475.80px;font-size:13px;color:#1c86a2;font-weight:700;font-family:'Liberation Sans', sans-serif;letter-spacing:-0.479px;">SAVE</span>
<span style="left:1882px;top:475.00px;font-size:13px;color:#5c5c5c;font-weight:700;font-family:'Liberation Sans', sans-serif;letter-spacing:-0.070px;">COPY LINK</span>
<span style="left:446px;top:539.00px;font-size:13px;color:#484848;font-weight:700;font-family:'Liberation Sans', sans-serif;letter-spacing:-0.453px;">RESULTS</span>
<span style="left:538px;top:539.00px;font-size:13px;color:#4a4a4a;font-weight:400;font-family:'Liberation Sans', sans-serif;letter-spacing:-0.141px;-webkit-text-stroke:0.3px;">QUERY HISTORY</span>
<span style="left:678px;top:539.00px;font-size:13px;color:#4a4a4a;font-weight:400;font-family:'Liberation Sans', sans-serif;letter-spacing:-0.046px;-webkit-text-stroke:0.3px;">PREVIEW: `OBSERVATIONS`</span>
<span style="left:889px;top:539.00px;font-size:13px;color:#4a4a4a;font-weight:400;font-family:'Liberation Sans', sans-serif;letter-spacing:0.080px;-webkit-text-stroke:0.3px;">PREVIEW: `THINGS`</span>
<span style="left:494px;top:599.25px;font-size:15.5px;color:#7a6f2e;font-weight:400;font-family:'Liberation Sans', sans-serif;letter-spacing:0.406px;">The query returned no data</span>
<span style="left:1714.5px;top:518.20px;font-size:15.2px;color:#4a4a4a;font-weight:400;font-family:'Liberation Sans', sans-serif;letter-spacing:0.440px;">Save dataset</span>
</body></html>
